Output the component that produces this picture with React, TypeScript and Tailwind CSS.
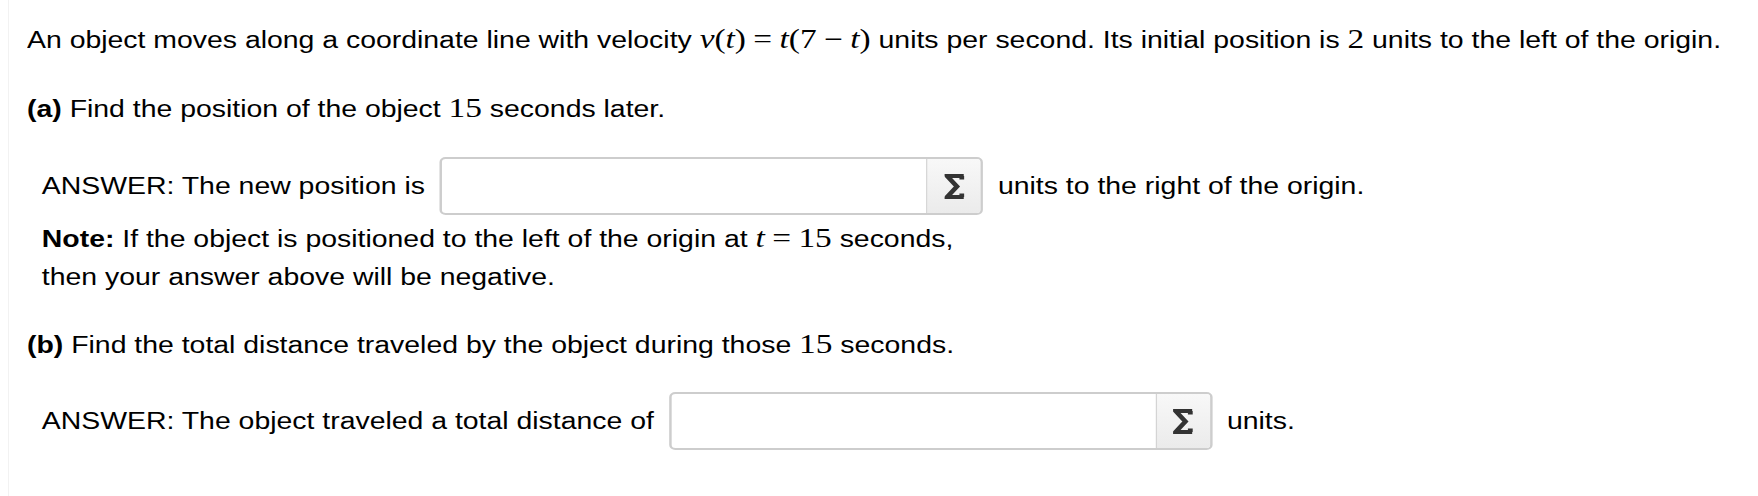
// Calculus question card: velocity problem with two answer boxes.
// The reference rendering is wider than it is tall, so the content block is stretched on x.
const SANS = "font-['Liberation_Sans',Arial,sans-serif]";
const SERIF = "font-['Liberation_Serif','Times_New_Roman',serif]";

function M({ children, italic = false }: { children: React.ReactNode; italic?: boolean }) {
  return (
    <span className={`${SERIF} text-[27px] leading-none ${italic ? "italic" : ""}`}>{children}</span>
  );
}

function Op({ children }: { children: React.ReactNode }) {
  return <span className={`${SERIF} mx-[6px] text-[27px] leading-none`}>{children}</span>;
}

function Sigma() {
  return (
    <svg width="16" height="25" viewBox="0 0 16 25" className="text-[#333]">
      <path
        d="M15.5 2 H2 L10 12.5 L2 23 H15.5 M14 23 V19.5 M14 2 V5.5"
        fill="none"
        stroke="currentColor"
        strokeWidth="4"
        strokeLinejoin="miter"
      />
    </svg>
  );
}

function AnswerBox() {
  return (
    <div className="flex h-[58px] w-[440px] overflow-hidden rounded-[5px] border-2 border-[#cdcdcd] bg-white">
      <div className="flex-1" />
      <button
        type="button"
        className="flex w-[44px] items-center justify-center border-l border-[#d4d4d4] bg-gradient-to-b from-[#f8f8f8] to-[#ebebeb]"
      >
        <Sigma />
      </button>
    </div>
  );
}

export default function App() {
  return (
    <div className={`min-h-[496px] overflow-hidden bg-white ${SANS} text-[23px] leading-[38px] text-black`}>
      <div className="ml-[8px] min-h-[496px] border-l border-[#f2f2f2] pl-[18px] pt-[21px]">
        <div className="origin-top-left scale-x-[1.235]">
          <p className="whitespace-nowrap">
            An object moves along a coordinate line with velocity{" "}
            <M italic>v</M>
            <M>(</M>
            <M italic>t</M>
            <M>)</M>
            <Op>=</Op>
            <M italic>t</M>
            <M>(7</M>
            <Op>−</Op>
            <M italic>t</M>
            <M>)</M> units per second. Its initial position is <M>2</M> units to the left of the
            origin.
          </p>

          <p className="mt-[31px]">
            <b>(a)</b> Find the position of the object <M>15</M> seconds later.
          </p>

          <div className="ml-[12px] mt-[29px]">
            <div className="flex items-center gap-[12px]">
              <span>ANSWER: The new position is</span>
              <AnswerBox />
              <span>units to the right of the origin.</span>
            </div>
            <p className="mt-[5px]">
              <b>Note:</b> If the object is positioned to the left of the origin at <M italic>t</M>
              <Op>=</Op>
              <M>15</M> seconds,
            </p>
            <p>then your answer above will be negative.</p>
          </div>

          <p className="mt-[30px]">
            <b>(b)</b> Find the total distance traveled by the object during those <M>15</M>{" "}
            seconds.
          </p>

          <div className="ml-[12px] mt-[28px] flex items-center gap-[12px]">
            <span>ANSWER: The object traveled a total distance of</span>
            <AnswerBox />
            <span>units.</span>
          </div>
        </div>
      </div>
    </div>
  );
}
